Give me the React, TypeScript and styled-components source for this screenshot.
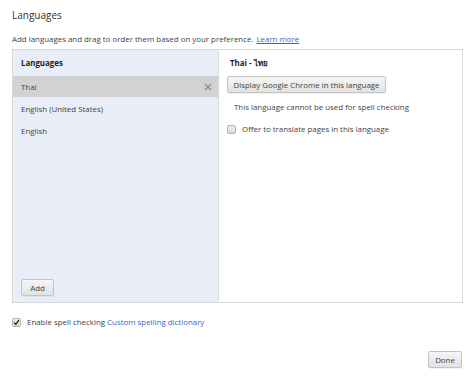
import React from 'react';
import styled, { createGlobalStyle } from 'styled-components';

const GlobalStyle = createGlobalStyle`
  html, body {
    margin: 0;
    padding: 0;
    background: #ffffff;
  }
  body {
    font-family: "Open Sans", "Noto Sans", sans-serif;
    color: #333333;
  }
`;

const languages = ['Thai', 'English (United States)', 'English'];

const FS = '7.9px';

const Dialog = styled.div`
  width: 474px;
  height: 376px;
  box-sizing: border-box;
  padding: 0 11px 0 12px;
  display: flex;
  flex-direction: column;
`;

const Title = styled.div`
  height: 30px;
  display: flex;
  align-items: center;
  font-size: 10px;
  color: #333;
`;

const Subtitle = styled.div`
  margin-top: 1px;
  height: 16px;
  display: flex;
  align-items: center;
  font-size: ${FS};
  color: #444;
`;

const Link = styled.a<{ $plain?: boolean }>`
  color: #3a66c4;
  text-decoration: ${({ $plain }) => ($plain ? 'none' : 'underline')};
  margin-left: ${({ $plain }) => ($plain ? '0' : '3px')};
  cursor: pointer;
`;

const Panel = styled.div`
  margin-top: 2px;
  height: 254px;
  box-sizing: border-box;
  border: 1px solid #d9d9d9;
  display: flex;
`;

const ListColumn = styled.div`
  width: 205px;
  flex-shrink: 0;
  background: #e8edf8;
  border-right: 1px solid #d9d9d9;
  display: flex;
  flex-direction: column;
`;

const ListHeader = styled.div`
  height: 26px;
  display: flex;
  align-items: center;
  padding-left: 8px;
  font-size: ${FS};
  font-weight: 700;
  color: #222;
`;

const Row = styled.div<{ $selected: boolean }>`
  height: 21px;
  display: flex;
  align-items: center;
  justify-content: space-between;
  padding: 0 6px 0 8px;
  font-size: ${FS};
  color: #444;
  background: ${({ $selected }) => ($selected ? '#d2d2d2' : 'transparent')};
  margin-bottom: 1px;
`;

const Spacer = styled.div`
  flex: 1;
`;

const Button = styled.button`
  font-family: inherit;
  font-size: ${FS};
  color: #444;
  height: 17px;
  padding: 0 7px;
  border: 1px solid #c3c3c3;
  border-radius: 2px;
  background: linear-gradient(#f6f6f6, #e2e2e2);
  box-shadow: 0 1px 0 rgba(0, 0, 0, 0.05);
  display: inline-flex;
  align-items: center;
  white-space: nowrap;
  cursor: pointer;
`;

const AddButton = styled(Button)`
  margin: 0 0 6px 8px;
  align-self: flex-start;
  width: 33px;
  justify-content: center;
`;

const DetailColumn = styled.div`
  flex: 1;
  padding: 0 0 0 8px;
  display: flex;
  flex-direction: column;
`;

const DetailTitle = styled.div`
  height: 26px;
  padding-left: 3px;
  display: flex;
  align-items: center;
  font-size: ${FS};
  font-weight: 700;
  color: #222;
`;

const DisplayButton = styled(Button)`
  align-self: flex-start;
  width: 159px;
  padding: 0;
  justify-content: center;
`;

const Note = styled.div`
  margin-top: 6px;
  padding-left: 7px;
  height: 16px;
  display: flex;
  align-items: center;
  font-size: ${FS};
  color: #444;
`;

const CheckRow = styled.label<{ $top: number }>`
  margin-top: ${({ $top }) => $top}px;
  height: 16px;
  display: flex;
  align-items: center;
  gap: 6px;
  font-size: ${FS};
  color: #444;
`;

const Box = styled.span`
  width: 9px;
  height: 9px;
  box-sizing: border-box;
  border: 1px solid #b5b5b5;
  border-radius: 2px;
  background: linear-gradient(#ececec, #dcdcdc);
  display: inline-flex;
  align-items: center;
  justify-content: center;
  flex-shrink: 0;
`;

const Footer = styled.div`
  margin-top: 11px;
`;

const BottomBar = styled.div`
  margin-top: 21px;
  display: flex;
  justify-content: flex-end;
  padding-right: 1px;
`;

const DoneButton = styled(Button)`
  width: 34px;
  justify-content: center;
`;

const CloseIcon = () => (
  <svg width="8" height="8" viewBox="0 0 8 8">
    <path d="M1 1 L7 7 M7 1 L1 7" stroke="#8a8a8a" strokeWidth="1.3" />
  </svg>
);

const CheckMark = () => (
  <svg width="9" height="9" viewBox="0 0 9 9">
    <path d="M1.5 4.6 L3.6 6.8 L7.6 1.6" stroke="#111" strokeWidth="1.6" fill="none" />
  </svg>
);

export default function App() {
  return (
    <>
      <GlobalStyle />
      <Dialog>
        <Title>Languages</Title>
        <Subtitle>
          Add languages and drag to order them based on your preference.
          <Link>Learn more</Link>
        </Subtitle>
        <Panel>
          <ListColumn>
            <ListHeader>Languages</ListHeader>
            {languages.map((lang, i) => (
              <Row key={lang} $selected={i === 0}>
                <span>{lang}</span>
                {i === 0 && <CloseIcon />}
              </Row>
            ))}
            <Spacer />
            <AddButton>Add</AddButton>
          </ListColumn>
          <DetailColumn>
            <DetailTitle>Thai - ไทย</DetailTitle>
            <DisplayButton>Display Google Chrome in this language</DisplayButton>
            <Note>This language cannot be used for spell checking</Note>
            <CheckRow $top={6}>
              <Box />
              <span>Offer to translate pages in this language</span>
            </CheckRow>
          </DetailColumn>
        </Panel>
        <Footer>
          <CheckRow $top={0}>
            <Box>
              <CheckMark />
            </Box>
            <span>
              Enable spell checking <Link $plain>Custom spelling dictionary</Link>
            </span>
          </CheckRow>
        </Footer>
        <BottomBar>
          <DoneButton>Done</DoneButton>
        </BottomBar>
      </Dialog>
    </>
  );
}
